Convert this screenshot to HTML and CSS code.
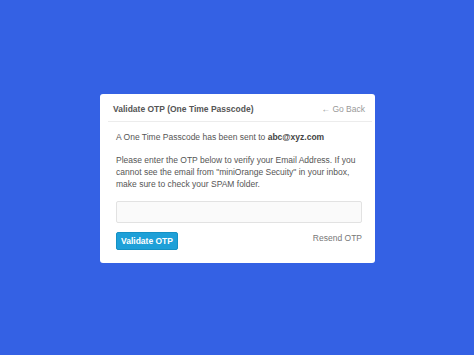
FILE: index.html
```html
<!DOCTYPE html>
<html lang="en">
<head>
  <meta charset="UTF-8">
  <meta name="viewport" content="width=device-width, initial-scale=1.0">
  <title>Validate OTP</title>
  <link rel="stylesheet" href="styles.css">
</head>
<body>
  <div class="page">
    <div class="card">
      <div class="card-header">
        <span class="title">Validate OTP (One Time Passcode)</span>
        <a class="back" href="#">&larr; Go Back</a>
      </div>
      <div class="card-body">
        <p class="sent">A One Time Passcode has been sent to <b>abc@xyz.com</b></p>
        <p class="info">Please enter the OTP below to verify your Email Address. If you cannot see the email from "miniOrange Secuity" in your inbox, make sure to check your SPAM folder.</p>
        <input type="text" class="otp-input">
        <div class="actions">
          <button class="validate-btn">Validate OTP</button>
          <a class="resend" href="#">Resend OTP</a>
        </div>
      </div>
    </div>
  </div>
</body>
</html>
```

FILE: styles.css
```css
* {
  box-sizing: border-box;
  font-family: 'Liberation Sans', Arial, sans-serif;
}
body {
  margin: 0;
  background-color: #3461e4;
}
.page {
  height: 355px;
  padding-top: 94px;
  padding-left: 100px;
}
.card {
  width: 275px;
  height: 169px;
  background-color: #fff;
  border-radius: 3px;
}
.card-header {
  display: flex;
  justify-content: space-between;
  align-items: center;
  height: 28px;
  margin: 0 3px 0 8px;
  padding: 3px 7px 0 5px;
  border-bottom: 1px solid #ececec;
}
.title {
  font-size: 8.5px;
  font-weight: bold;
  color: #555;
}
.back {
  font-size: 8.5px;
  color: #999;
  text-decoration: none;
}
.card-body {
  padding: 9px 13px 0 16px;
}
.card-body p {
  margin: 0;
  font-size: 8.5px;
  color: #555;
  line-height: 12px;
}
.sent b {
  color: #444;
}
.info {
  margin-top: 11px !important;
}
.otp-input {
  display: block;
  width: 246px;
  height: 22px;
  margin-top: 11px;
  border: 1px solid #e2e2e2;
  border-radius: 2px;
  background-color: #fafafa;
}
.actions {
  display: flex;
  justify-content: space-between;
  align-items: flex-start;
  margin-top: 9px;
  width: 246px;
}
.validate-btn {
  width: 62px;
  height: 18px;
  padding: 0;
  border: 1px solid #1591c4;
  border-radius: 2px;
  background-color: #1ea0d8;
  color: #fff;
  font-size: 8.5px;
  font-weight: bold;
}
.resend {
  margin-top: 1px;
  font-size: 8.5px;
  color: #777;
  text-decoration: none;
}
```
